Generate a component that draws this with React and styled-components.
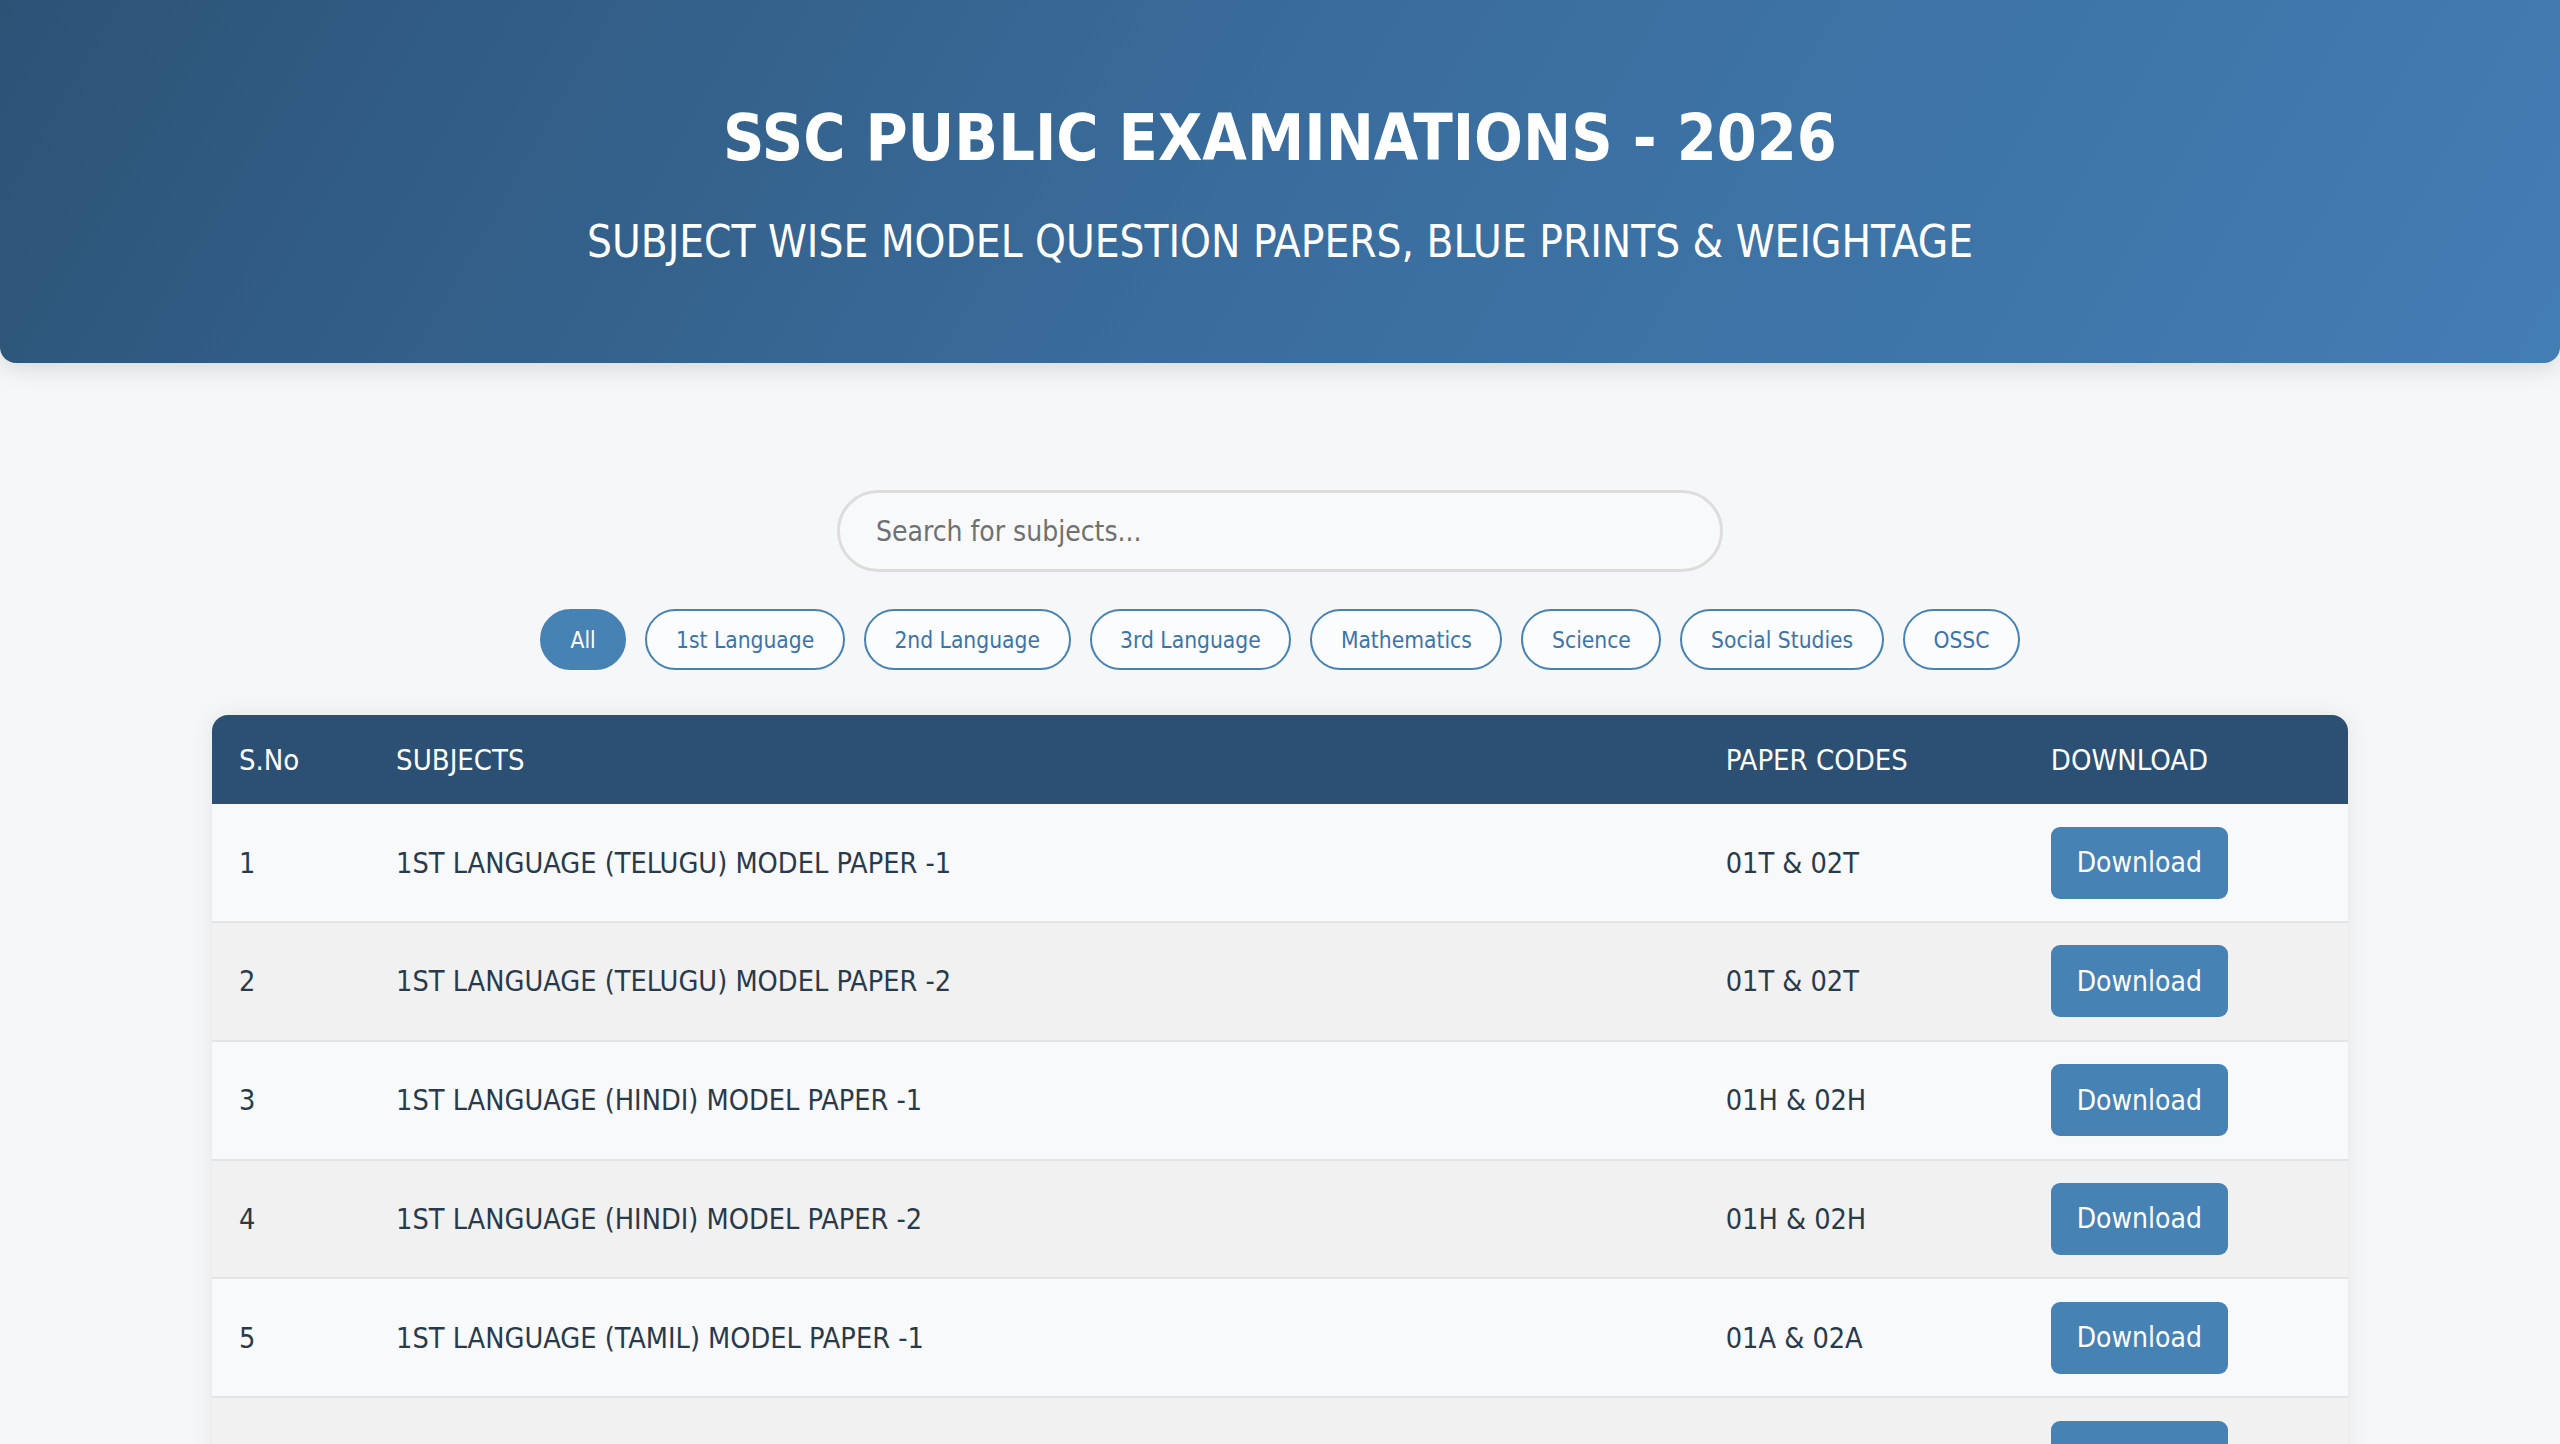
import React from 'react';
import styled, { createGlobalStyle } from 'styled-components';

const papers = [
  { subject: '1ST LANGUAGE (TELUGU) MODEL PAPER -1', codes: '01T & 02T' },
  { subject: '1ST LANGUAGE (TELUGU) MODEL PAPER -2', codes: '01T & 02T' },
  { subject: '1ST LANGUAGE (HINDI) MODEL PAPER -1', codes: '01H & 02H' },
  { subject: '1ST LANGUAGE (HINDI) MODEL PAPER -2', codes: '01H & 02H' },
  { subject: '1ST LANGUAGE (TAMIL) MODEL PAPER -1', codes: '01A & 02A' },
  { subject: '1ST LANGUAGE (TAMIL) MODEL PAPER -2', codes: '01A & 02A' },
  { subject: '1ST LANGUAGE (KANNADA) MODEL PAPER -1', codes: '01K & 02K' },
];

const filters = ['All', '1st Language', '2nd Language', '3rd Language', 'Mathematics', 'Science', 'Social Studies', 'OSSC'];

const GlobalStyle = createGlobalStyle`
  * { box-sizing: border-box; }
  body {
    margin: 0;
    background: #f5f7f9;
    font-family: "DejaVu Sans Condensed", "DejaVu Sans", Verdana, sans-serif;
    color: #2c3e50;
  }
`;

const Header = styled.header`
  background: linear-gradient(120deg, #2c5376 0%, #3a6d9d 50%, #427db3 100%);
  color: #fff;
  text-align: center;
  padding: 100px 40px 95px;
  border-radius: 0 0 16px 16px;
  box-shadow: 0 6px 24px rgba(0, 0, 0, 0.12);
  h1 {
    margin: 0 0 39px;
    font-size: 64px;
    line-height: 1.2;
    font-weight: bold;
  }
  p {
    margin: 0;
    font-size: 43.7px;
    line-height: 1.2;
  }
`;

const Main = styled.main`
  padding: 127px 212px 0;
  display: flex;
  flex-direction: column;
  align-items: center;
`;

const Search = styled.input`
  width: 886px;
  height: 82px;
  border: 3px solid #dddddd;
  border-radius: 41px;
  background: #f8f9fa;
  padding: 0 36px;
  font-family: inherit;
  font-size: 28px;
  color: #333;
  outline: none;
  &::placeholder {
    color: #707070;
  }
`;

const Filters = styled.div`
  display: flex;
  justify-content: center;
  gap: 19px;
  margin: 37px 0 45px;
`;

const Pill = styled.button`
  height: 61px;
  padding: 0 28.6px;
  border-radius: 31px;
  border: 2px solid #4682b4;
  background: ${(p) => (p.$active ? '#4682b4' : '#fbfcfd')};
  color: ${(p) => (p.$active ? '#fff' : '#3b74aa')};
  font-family: inherit;
  font-size: 22.6px;
  cursor: pointer;
`;

const Table = styled.table`
  width: 100%;
  border-collapse: separate;
  border-spacing: 0;
  table-layout: fixed;
  border-radius: 16px;
  overflow: hidden;
  box-shadow: 0 0 24px rgba(0, 0, 0, 0.08);
`;

const Th = styled.th`
  background: #2c5073;
  color: #fff;
  text-align: left;
  font-weight: normal;
  font-size: 29px;
  height: 89px;
  padding: 0 27px;
`;

const Row = styled.tr`
  background: ${(p) => (p.$even ? '#f1f1f2' : '#f8f9fa')};
  td {
    padding: 22.4px 27px;
    border-bottom: 2px solid #e2e5e8;
    font-size: 28.6px;
    color: #283a4c;
  }
`;

const DownloadButton = styled.button`
  display: block;
  width: 177px;
  height: 72px;
  background: #4682b4;
  color: #fff;
  border: none;
  border-radius: 9px;
  font-family: inherit;
  font-size: 28px;
  cursor: pointer;
`;

const App = () => {
  return (
    <>
      <GlobalStyle />
      <Header>
        <h1>SSC PUBLIC EXAMINATIONS - 2026</h1>
        <p>SUBJECT WISE MODEL QUESTION PAPERS, BLUE PRINTS &amp; WEIGHTAGE</p>
      </Header>
      <Main>
        <Search placeholder="Search for subjects..." />
        <Filters>
          {filters.map((f, i) => (
            <Pill key={f} $active={i === 0}>{f}</Pill>
          ))}
        </Filters>
        <Table>
          <colgroup>
            <col style={{ width: 157 }} />
            <col style={{ width: 1329 }} />
            <col style={{ width: 325 }} />
            <col style={{ width: 324 }} />
          </colgroup>
          <thead>
            <tr>
              <Th>S.No</Th>
              <Th>SUBJECTS</Th>
              <Th>PAPER CODES</Th>
              <Th>DOWNLOAD</Th>
            </tr>
          </thead>
          <tbody>
            {papers.map((p, i) => (
              <Row key={i} $even={i % 2 === 1}>
                <td>{i + 1}</td>
                <td>{p.subject}</td>
                <td>{p.codes}</td>
                <td>
                  <DownloadButton>Download</DownloadButton>
                </td>
              </Row>
            ))}
          </tbody>
        </Table>
      </Main>
    </>
  );
};

export default App;
